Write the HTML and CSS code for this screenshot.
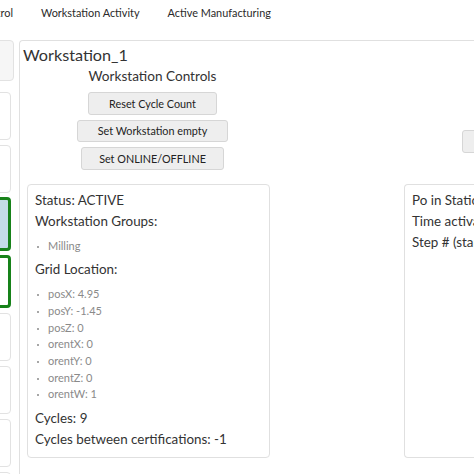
FILE: index.html
```html
<!DOCTYPE html>
<html>
<head>
<meta charset="utf-8">
<link rel="stylesheet" href="styles.css">
</head>
<body>
<nav class="topnav">
  <a class="nav-item nav-first">Workstation Control</a>
  <a class="nav-item">Workstation Activity</a>
  <a class="nav-item">Active Manufacturing</a>
</nav>
<div class="layout">
  <aside class="sidebar">
    <div class="side-item side-head"></div>
    <div class="side-item"></div>
    <div class="side-item"></div>
    <div class="side-item active"></div>
    <div class="side-item selected"></div>
    <div class="side-item"></div>
    <div class="side-item"></div>
    <div class="side-item"></div>
    <div class="side-item"></div>
  </aside>
  <main class="panel">
    <h1 class="title">Workstation_1</h1>
    <div class="grid">
      <section class="controls">
        <h2 class="controls-title">Workstation Controls</h2>
        <button class="btn">Reset Cycle Count</button>
        <button class="btn">Set Workstation empty</button>
        <button class="btn btn-narrow">Set ONLINE/OFFLINE</button>
      </section>
      <div class="spacer"></div>
      <section class="right-controls">
        <button class="btn">Show Po Details</button>
      </section>

      <section class="card">
        <p class="line">Status: ACTIVE</p>
        <p class="line">Workstation Groups:</p>
        <ul class="list">
          <li>Milling</li>
        </ul>
        <p class="line">Grid Location:</p>
        <ul class="list">
          <li>posX: 4.95</li>
          <li>posY: -1.45</li>
          <li>posZ: 0</li>
          <li>orentX: 0</li>
          <li>orentY: 0</li>
          <li>orentZ: 0</li>
          <li>orentW: 1</li>
        </ul>
        <p class="line">Cycles: 9</p>
        <p class="line">Cycles between certifications: -1</p>
      </section>
      <div class="spacer"></div>
      <section class="card card-right">
        <p class="line">Po in Station: none</p>
        <p class="line">Time activated: -</p>
        <p class="line">Step # (started): -</p>
      </section>
    </div>
  </main>
</div>
</body>
</html>
```
FILE: styles.css
```css
* { box-sizing: border-box; }
html, body {
  margin: 0;
  padding: 0;
  width: 474px;
  height: 474px;
  overflow: hidden;
  background: #fff;
  font-family: Lato, "Open Sans", sans-serif;
  color: #333;
}
.topnav {
  display: flex;
  height: 40px;
  align-items: flex-start;
  margin-left: -120px;
  white-space: nowrap;
}
.nav-item {
  padding: 6px 14px 0;
  font-size: 10.9px;
  color: #2a2a2a;
}
.nav-first {
  width: 147px;
  text-align: right;
  flex: none;
}
.layout {
  display: flex;
  gap: 5px;
  height: 434px;
}
.sidebar {
  width: 100px;
  margin-left: -86px;
  flex: none;
  display: flex;
  flex-direction: column;
  gap: 5px;
}
.side-item {
  height: 48px;
  border: 1px solid #e2e2e2;
  border-radius: 4px;
  margin-right: 3px;
  background: #fff;
  flex: none;
}
.side-item.side-head {
  height: 41px;
  margin-right: 0;
  background: #f6f6f6;
  margin-bottom: 6px;
}
.side-item.active {
  background: #c3dce6;
  border: 3px solid #17821a;
  margin-right: 3px;
  height: 54px;
  margin-top: -1px;
}
.side-item.selected {
  border: 3px solid #17821a;
  margin-right: 3px;
  height: 53px;
  margin-top: -1px;
}
.side-item.selected + .side-item {
  margin-top: 0;
}
.panel {
  flex: 1;
  border: 1px solid #e0e0e0;
  border-right: none;
  border-bottom: none;
  border-radius: 4px 0 0 0;
  padding: 0 0 0 7px;
  min-width: 0;
}
.title {
  margin: 3px 0 0 -4px;
  font-size: 16.2px;
  font-weight: 400;
  line-height: 22px;
  color: #333;
}
.grid {
  display: grid;
  grid-template-columns: 251px 126px 200px;
  row-gap: 13px;
}
.controls {
  display: flex;
  flex-direction: column;
  align-items: center;
  gap: 5px;
  padding-top: 1px;
  padding-bottom: 1px;
}
.controls-title {
  margin: 0 0 2px;
  font-size: 13.6px;
  font-weight: 400;
  line-height: 18px;
  color: #333;
}
.btn {
  font-family: Lato, "Open Sans", sans-serif;
  font-size: 10.8px;
  color: #222;
  background: #eeeeee;
  border: 1px solid #d6d6d6;
  border-radius: 3px;
  height: 22.5px;
  padding: 0 20px;
}
.btn-narrow {
  padding: 0 17px;
}
.right-controls {
  padding: 64px 0 0 58px;
}
.card {
  width: 243px;
  height: 274px;
  border: 1px solid #e0e0e0;
  border-radius: 4px;
  padding: 5px 0 0 7px;
  white-space: nowrap;
  overflow: hidden;
}
.card-right {
  width: 200px;
  border-right: none;
  border-radius: 4px 0 0 4px;
}
.line {
  margin: 0;
  font-size: 13.4px;
  line-height: 21px;
  color: #333;
}
.list {
  margin: 6px 0 5px;
  padding-left: 13px;
  list-style: none;
}
.list li {
  position: relative;
  font-size: 11px;
  line-height: 16.7px;
  color: #8a8a8a;
}
.list li::before {
  content: "";
  position: absolute;
  left: -11px;
  top: 8px;
  width: 2px;
  height: 2px;
  border-radius: 50%;
  background: #8a8a8a;
}
```
